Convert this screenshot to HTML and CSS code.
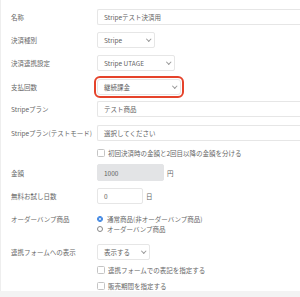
FILE: index.html
```html
<!DOCTYPE html>
<html lang="ja">
<head>
<meta charset="UTF-8">
<meta name="viewport" content="width=device-width, initial-scale=1.0">
<title>商品設定</title>
<link rel="stylesheet" href="styles.css">
</head>
<body>

<div class="panel">
  <div class="row">
    <div class="label">名称</div>
    <div class="field wide">Stripeテスト決済用</div>
  </div>
  <div class="row">
    <div class="label">決済種別</div>
    <div class="field select w58">Stripe<span class="chev"></span></div>
  </div>
  <div class="row r-link">
    <div class="label">決済連携設定</div>
    <div class="field select w78">Stripe UTAGE<span class="chev"></span></div>
  </div>
  <div class="row r-pay">
    <div class="label">支払回数</div>
    <div class="field select w83 marked">継続課金<span class="chev"></span></div>
  </div>
  <div class="row r-plan">
    <div class="label">Stripeプラン</div>
    <div class="field wide">テスト商品</div>
  </div>
  <div class="row r-test">
    <div class="label">Stripeプラン(テストモード)</div>
    <div class="field wide">選択してください</div>
  </div>
  <div class="row r-check">
    <div class="label"></div>
    <label class="check"><span class="box"></span>初回決済時の金額と2回目以降の金額を分ける</label>
  </div>
  <div class="row r-price">
    <div class="label">金額</div>
    <div class="field disabled w67">1000</div>
    <span class="unit">円</span>
  </div>
  <div class="row r-trial">
    <div class="label">無料お試し日数</div>
    <div class="field w46">0</div>
    <span class="unit">日</span>
  </div>
  <div class="row r-bump">
    <div class="label">オーダーバンプ商品</div>
    <div class="radios">
      <label class="radio"><span class="dot on"></span>通常商品(非オーダーバンプ商品)</label>
      <label class="radio"><span class="dot"></span>オーダーバンプ商品</label>
    </div>
  </div>
  <div class="row r-form">
    <div class="label">連携フォームへの表示</div>
    <div class="field select w53">表示する<span class="chev"></span></div>
  </div>
  <div class="row r-cb2">
    <div class="label"></div>
    <label class="check"><span class="box"></span>連携フォームでの表記を指定する</label>
  </div>
  <div class="row r-cb3">
    <div class="label"></div>
    <label class="check"><span class="box"></span>販売期間を指定する</label>
  </div>
</div>
<div class="footer"></div>

</body>
</html>
```

FILE: styles.css
```css
body {
  margin: 0;
  padding: 0;
  background-color: #ffffff;
  font-family: "Noto Sans CJK JP", "Noto Sans", sans-serif;
  font-size: 6.5px;
  color: #666666;
}

.panel {
  padding: 9px 0 1px 10px;
  border-left: 1px solid #eeeeee;
}

.row {
  display: flex;
  align-items: center;
  margin-bottom: 7px;
}

.label {
  width: 86px;
  flex-shrink: 0;
  color: #666666;
  white-space: nowrap;
}

.field {
  box-sizing: border-box;
  height: 16px;
  border: 1px solid #e6e6e6;
  border-radius: 2px;
  padding: 0 6px;
  display: flex;
  align-items: center;
  color: #5f5f5f;
  background-color: #ffffff;
  white-space: nowrap;
}

.wide {
  flex: 1;
  border-right: none;
  border-radius: 2px 0 0 2px;
}

.select {
  justify-content: space-between;
  padding-right: 4px;
}

.chev {
  width: 2.5px;
  height: 2.5px;
  border-right: 0.8px solid #999999;
  border-bottom: 0.8px solid #999999;
  transform: rotate(45deg);
  margin-top: -2px;
}

.w58 { width: 58px; }
.w78 { width: 78px; }
.w83 { width: 84px; }
.w67 { width: 67px; }
.w46 { width: 46px; }
.w53 { width: 53px; }

.r-link { margin-bottom: 8px; }
.r-pay { margin-bottom: 6px; }
.r-plan { margin-bottom: 8px; }
.r-test { margin-bottom: 8px; }
.r-check { margin-bottom: 7px; }
.r-price { margin-bottom: 7px; }
.r-trial { margin-bottom: 10px; }

.marked {
  outline: 2px solid #e5432b;
  outline-offset: 1px;
  border-radius: 3px;
}

.check {
  display: flex;
  align-items: center;
  height: 8px;
  white-space: nowrap;
}

.box {
  box-sizing: border-box;
  width: 8px;
  height: 8px;
  border: 1px solid #c4c4c4;
  border-radius: 1.5px;
  margin-right: 3px;
}

.disabled {
  background-color: #e3e4e6;
  border-color: #e3e4e6;
  height: 17px;
}

.unit {
  margin-left: 3px;
}

.radios {
  display: flex;
  flex-direction: column;
}

.radio {
  display: flex;
  align-items: center;
  height: 10px;
  white-space: nowrap;
}

.dot {
  box-sizing: border-box;
  width: 6px;
  height: 6px;
  border-radius: 50%;
  border: 0.8px solid #888888;
  margin-right: 4px;
}

.dot.on {
  border: 1.5px solid #2d7be0;
  background-color: #ffffff;
  box-shadow: inset 0 0 0 1px #2d7be0;
}

.r-bump {
  align-items: flex-start;
  margin-bottom: 10px;
}

.r-bump .label { line-height: 10px; }

.r-form { margin-bottom: 6px; }
.r-cb2 { margin-bottom: 8px; }
.r-cb3 { margin-bottom: 0; }

.footer {
  height: 20px;
  background-color: #f3f3f3;
}
```
